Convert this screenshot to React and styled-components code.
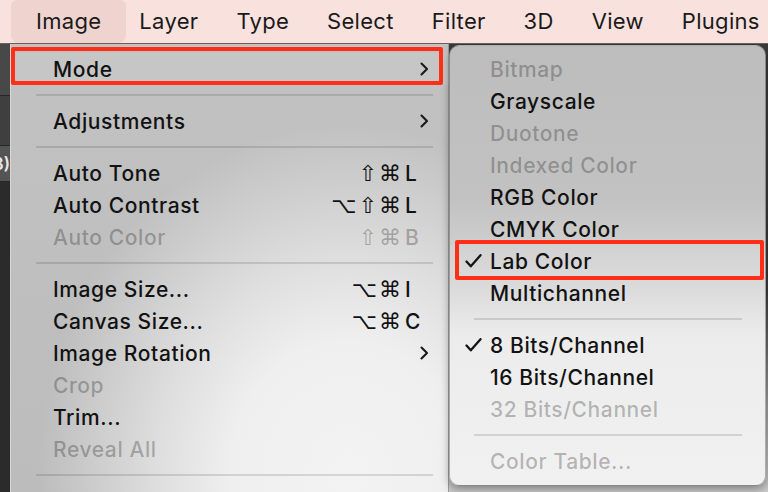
import styled, { createGlobalStyle, css } from "styled-components";

const GlobalStyle = createGlobalStyle`
  html, body {
    margin: 0;
    padding: 0;
    background: #2f2f2f;
    overflow: hidden;
  }
  * { box-sizing: border-box; }
`;

const Screen = styled.div`
  width: 768px;
  height: 492px;
  display: flex;
  flex-direction: column;
  overflow: hidden;
  font-family: Inter, "Liberation Sans", "DejaVu Sans", sans-serif;
  color: #161616;
`;

const MenuBar = styled.div`
  height: 44px;
  flex: none;
  display: flex;
  align-items: flex-start;
  padding-left: 17px;
  background: #f9e2de;
  border-bottom: 1px solid #6b5f5d;
`;

const BarItem = styled.div`
  height: 43px;
  line-height: 43px;
  padding: 0 19px;
  font-size: 22px;
  letter-spacing: 0.3px;
  color: #1a1a1a;
  ${(p) =>
    p.$active &&
    css`
      padding: 0 25px;
      margin: 0 -6px;
      background: #eed3cf;
      border-radius: 6px 6px 8px 8px;
    `}
`;

const Stage = styled.div`
  flex: 1;
  display: flex;
  align-items: flex-start;
  overflow: hidden;
  background: linear-gradient(to bottom, #3a3a3a 0%, #3a3a3a 55%, #9a9a9a 80%, #c9c9c9 100%);
`;

const SideStrip = styled.div`
  width: 10px;
  height: 100%;
  flex: none;
  display: flex;
  flex-direction: column;
  background: #2b2b2b;
`;

const StripBlock = styled.div`
  height: ${(p) => p.$h}px;
  background: ${(p) => p.$bg};
  border-bottom: 1px solid #262626;
  overflow: hidden;
  display: flex;
  align-items: center;
  justify-content: flex-end;
  color: #e8e8e8;
  font-size: 17px;
  font-weight: 600;
  white-space: nowrap;
`;

const MainMenu = styled.div`
  width: 439px;
  height: 100%;
  flex: none;
  padding-top: 9px;
  display: flex;
  flex-direction: column;
  background:
    radial-gradient(ellipse 310px 350px at 77% 96%, #f4f3f3 0%, #efefef 38%, #dedede 62%, rgba(200, 200, 200, 0) 100%),
    linear-gradient(to bottom, #c2c2c2, #bcbcbc);
  box-shadow: inset 1px 0 0 #d6d6d6, inset -1px 0 0 #9c9c9c;
`;

const SubMenu = styled.div`
  width: 317px;
  height: 441px;
  flex: none;
  margin-top: 1px;
  padding: 7px 0 7px;
  display: flex;
  flex-direction: column;
  border: 1px solid rgba(0, 0, 0, 0.28);
  border-radius: 10px;
  background: linear-gradient(
    to bottom,
    #bdbdbd 0%,
    #c2c2c2 35%,
    #d6d6d6 52%,
    #ececec 66%,
    #f2f1f1 100%
  );
  box-shadow: 0 3px 8px rgba(0, 0, 0, 0.35);
`;

const Row = styled.div`
  position: relative;
  height: 32px;
  flex: none;
  display: flex;
  align-items: center;
  padding: ${(p) => (p.$sub ? "0 20px 0 15px" : "0 20px 0 43px")};
  font-size: 21px;
  font-weight: 500;
  letter-spacing: 0.6px;
  color: ${(p) => (p.$off ? "rgba(0, 0, 0, 0.27)" : "#121212")};
  ${(p) =>
    p.$marked &&
    css`
      background: rgba(255, 255, 255, 0.07);
      &::after {
        content: "";
        position: absolute;
        left: ${p.$sub ? 5 : 1}px;
        right: ${p.$sub ? 1 : 6}px;
        top: ${p.$sub ? -5 : -6}px;
        bottom: ${p.$sub ? -3 : 0}px;
        border: 4px solid #ff2e17;
        border-radius: 2px;
      }
    `}
`;

const CheckCell = styled.span`
  width: 25px;
  flex: none;
  display: flex;
  align-items: center;
`;

const Label = styled.span`
  flex: 1;
  white-space: nowrap;
`;

const Shortcut = styled.span`
  display: flex;
  align-items: center;
  margin-right: 11px;
  font-family: "DejaVu Sans", Inter, sans-serif;
  font-size: 22px;
  font-weight: 400;
  letter-spacing: 0;
`;

const Mods = styled.span`
  letter-spacing: 2px;
`;

const Key = styled.span`
  width: 15px;
  padding-left: 2px;
  font-family: Inter, "Liberation Sans", sans-serif;
  font-size: 21px;
  font-weight: 500;
`;

const Separator = styled.div`
  height: 20px;
  flex: none;
  display: flex;
  align-items: center;
  padding: ${(p) => (p.$sub ? "0 23px 0 24px" : "0 16px 0 26px")};
  &::before {
    content: "";
    flex: 1;
    height: 2px;
    background: rgba(0, 0, 0, 0.12);
  }
`;

const Chevron = () => (
  <svg width="9" height="14" viewBox="0 0 9 14" fill="none">
    <path d="M1.5 1.5 L7 7 L1.5 12.5" stroke="#1a1a1a" strokeWidth="2.1" strokeLinecap="round" strokeLinejoin="round" />
  </svg>
);

const Check = () => (
  <svg width="17" height="14" viewBox="0 0 17 14" fill="none">
    <path d="M1.5 7.5 L5.8 12.3 L15.5 1.2" stroke="#141414" strokeWidth="2.3" strokeLinecap="round" strokeLinejoin="round" />
  </svg>
);

const barItems = ["Image", "Layer", "Type", "Select", "Filter", "3D", "View", "Plugins"];

const mainItems = [
  { label: "Mode", sub: true, marked: true },
  { sep: true },
  { label: "Adjustments", sub: true },
  { sep: true },
  { label: "Auto Tone", mods: "⇧⌘", key: "L" },
  { label: "Auto Contrast", mods: "⌥⇧⌘", key: "L" },
  { label: "Auto Color", mods: "⇧⌘", key: "B", off: true },
  { sep: true },
  { label: "Image Size...", mods: "⌥⌘", key: "I" },
  { label: "Canvas Size...", mods: "⌥⌘", key: "C" },
  { label: "Image Rotation", sub: true },
  { label: "Crop", off: true },
  { label: "Trim..." },
  { label: "Reveal All", off: true },
  { sep: true },
];

const modeItems = [
  { label: "Bitmap", off: true },
  { label: "Grayscale" },
  { label: "Duotone", off: true },
  { label: "Indexed Color", off: true },
  { label: "RGB Color" },
  { label: "CMYK Color" },
  { label: "Lab Color", checked: true, marked: true },
  { label: "Multichannel" },
  { sep: true },
  { label: "8 Bits/Channel", checked: true },
  { label: "16 Bits/Channel" },
  { label: "32 Bits/Channel", off: true },
  { sep: true },
  { label: "Color Table...", off: true },
];

export default function App() {
  return (
    <>
      <GlobalStyle />
      <Screen>
        <MenuBar>
          {barItems.map((name, i) => (
            <BarItem key={name} $active={i === 0}>
              {name}
            </BarItem>
          ))}
        </MenuBar>
        <Stage>
          <SideStrip>
            <StripBlock $h={52} $bg="#484848" />
            <StripBlock $h={50} $bg="#3f3f3f" />
            <StripBlock $h={36} $bg="#545454">8)</StripBlock>
          </SideStrip>

          <MainMenu>
            {mainItems.map((it, i) =>
              it.sep ? (
                <Separator key={i} />
              ) : (
                <Row key={i} $off={it.off} $marked={it.marked}>
                  <Label>{it.label}</Label>
                  {it.key && (
                    <Shortcut>
                      <Mods>{it.mods}</Mods>
                      <Key>{it.key}</Key>
                    </Shortcut>
                  )}
                  {it.sub && <Chevron />}
                </Row>
              )
            )}
          </MainMenu>

          <SubMenu>
            {modeItems.map((it, i) =>
              it.sep ? (
                <Separator key={i} $sub />
              ) : (
                <Row key={i} $sub $off={it.off} $marked={it.marked}>
                  <CheckCell>{it.checked && <Check />}</CheckCell>
                  <Label>{it.label}</Label>
                </Row>
              )
            )}
          </SubMenu>
        </Stage>
      </Screen>
    </>
  );
}
